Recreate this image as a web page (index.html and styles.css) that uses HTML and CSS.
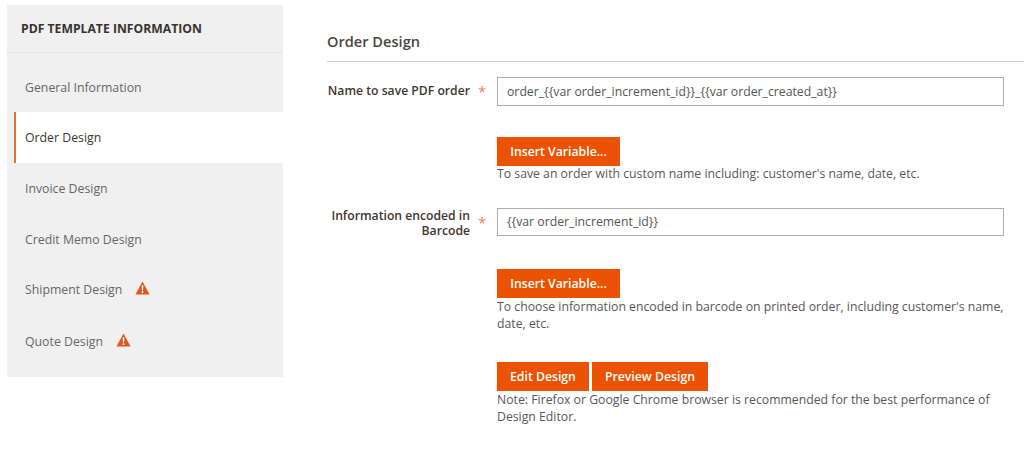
FILE: index.html
```html
<!DOCTYPE html>
<html lang="en">
<head>
<meta charset="utf-8">
<title>PDF Template Information</title>
<link rel="stylesheet" href="styles.css">
</head>
<body>
<div class="page">
  <aside class="side">
    <div class="side-title">PDF TEMPLATE INFORMATION</div>
    <ul class="tabs">
      <li class="tab tab-first">General Information</li>
      <li class="tab tab-active">Order Design</li>
      <li class="tab">Invoice Design</li>
      <li class="tab">Credit Memo Design</li>
      <li class="tab">Shipment Design
        <svg class="warn" viewBox="0 0 16 15" width="15" height="14"><path d="M8 0.5 15.6 14.5H0.4Z" fill="#e2571e"/><path d="M7.1 4.6h1.8l-.3 5.6H7.4Z M7.1 11h1.8v1.9H7.1Z" fill="#fff"/></svg>
      </li>
      <li class="tab tab-last">Quote Design
        <svg class="warn" viewBox="0 0 16 15" width="15" height="14"><path d="M8 0.5 15.6 14.5H0.4Z" fill="#e2571e"/><path d="M7.1 4.6h1.8l-.3 5.6H7.4Z M7.1 11h1.8v1.9H7.1Z" fill="#fff"/></svg>
      </li>
    </ul>
  </aside>
  <main class="main">
    <h2 class="section-title">Order Design</h2>
    <div class="field field-one">
      <label class="label">Name to save PDF order</label>
      <span class="star">*</span>
      <div class="control">
        <input class="input" type="text" value="order_{{var order_increment_id}}_{{var order_created_at}}">
        <div class="actions actions-high"><button class="btn btn-wide">Insert Variable...</button></div>
        <p class="note">To save an order with custom name including: customer's name, date, etc.</p>
      </div>
    </div>
    <div class="field field-two">
      <label class="label label-wrap">Information encoded in Barcode</label>
      <span class="star">*</span>
      <div class="control">
        <input class="input" type="text" value="{{var order_increment_id}}">
        <div class="actions actions-low"><button class="btn btn-wide">Insert Variable...</button></div>
        <p class="note note-loose">To choose information encoded in barcode on printed order, including customer's name, date, etc.</p>
      </div>
    </div>
    <div class="field field-three">
      <span class="label"></span>
      <span class="star"></span>
      <div class="control">
        <div class="actions actions-flush">
          <button class="btn">Edit Design</button>
          <button class="btn">Preview Design</button>
        </div>
        <p class="note note-loose">Note: Firefox or Google Chrome browser is recommended for the best performance of Design Editor.</p>
      </div>
    </div>
  </main>
</div>
</body>
</html>
```
FILE: styles.css
```css
* { box-sizing: border-box; }
html, body { margin: 0; padding: 0; background: #fff; }
body { font-family: "Open Sans", "Liberation Sans", sans-serif; color: #41362f; overflow: hidden; }
.page { display: flex; align-items: flex-start; width: 1024px; height: 466px; padding-top: 5px; padding-left: 7px; }
.side { width: 276px; background: #f0f0f0; flex: none; }
.side-title { height: 48px; padding: 15px 0 0 14px; font-size: 12.2px; line-height: 18px; font-weight: 700; color: #38332f; border-bottom: 1px solid #e6e6e6; }
.tabs { list-style: none; margin: 0; padding: 0; }
.tab { height: 50.5px; padding: 17px 0 0 18px; font-size: 12.3px; line-height: 18px; color: #666; display: flex; align-items: flex-start; }
.tab-first { height: 59px; padding-top: 26px; }
.tab-active { height: 51px; margin-left: 7px; padding-left: 9px; padding-top: 17px; background: #fff; border-left: 2px solid #e2702f; color: #41362f; }
.tab-last { height: 62px; padding-top: 18px; }
.warn { margin-left: 13px; margin-top: 0; flex: none; }
.main { margin-left: 44px; flex: 1; min-width: 0; }
.section-title { margin: 0; height: 57px; padding-top: 26px; border-bottom: 1px solid #d0d0d0; font-size: 14.6px; line-height: 20px; font-weight: 600; color: #4a4540; }
.field { display: flex; align-items: flex-start; }
.field-one { margin-top: 15px; }
.field-two { margin-top: 25px; }
.field-three { margin-top: 30px; }
.label { width: 143px; flex: none; text-align: right; font-size: 12.2px; line-height: 15.5px; font-weight: 600; color: #41362f; padding-top: 6px; }
.label-wrap { padding-top: 0; }
.star { width: 27px; flex: none; text-align: right; padding-right: 11px; color: #e87f52; font-size: 14px; line-height: 20px; padding-top: 5px; }
.control { width: 507px; flex: none; }
.input { display: block; width: 100%; height: 28.5px; border: 1px solid #adadad; border-radius: 0; padding: 0 9px; font-family: inherit; font-size: 12.25px; color: #555; background: #fff; outline: none; }
.actions { display: flex; gap: 3px; }
.actions-high { margin-top: 31.5px; }
.actions-low { margin-top: 33px; }
.actions-flush { margin-top: 0; }
.btn { height: 29px; padding: 0 13px; border: 0; background: #eb5202; color: #fff; font-family: inherit; font-size: 12.25px; font-weight: 600; }
.btn-wide { width: 123px; padding: 0; }
.note { margin: 0; font-size: 12.25px; line-height: 16.5px; color: #575757; }
.note-loose { margin-top: 1px; }
```
